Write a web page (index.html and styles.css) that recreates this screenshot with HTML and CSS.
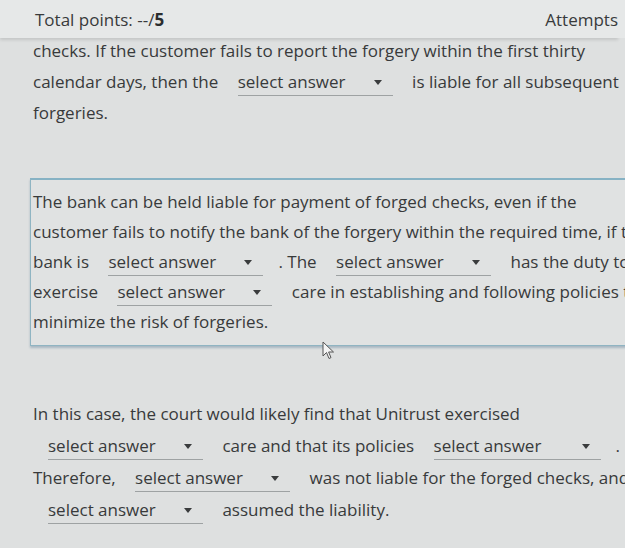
FILE: index.html
```html
<!DOCTYPE html>
<html>
<head>
<meta charset="utf-8">
<link rel="stylesheet" href="styles.css">
</head>
<body>
<div class="page">
  <header class="topbar">
    <span class="points">Total points: --/<b>5</b></span>
    <span class="attempts">Attempts</span>
  </header>
  <main class="content">
    <p class="para first">checks. If the customer fails to report the forgery within the first thirty<br>calendar days, then the <span class="sel"><span>select answer</span><i class="caret"></i></span> is liable for all subsequent<br>forgeries.</p>

    <div class="box">
      <p class="para">The bank can be held liable for payment of forged checks, even if the<br>customer fails to notify the bank of the forgery within the required time, if the<br>bank is <span class="sel"><span>select answer</span><i class="caret"></i></span>. The <span class="sel"><span>select answer</span><i class="caret"></i></span> has the duty to<br>exercise <span class="sel"><span>select answer</span><i class="caret"></i></span> care in establishing and following policies to<br>minimize the risk of forgeries.</p>
    </div>

    <p class="para third">In this case, the court would likely find that Unitrust exercised<br><span class="sel"><span>select answer</span><i class="caret"></i></span> care and that its policies <span class="sel wide"><span>select answer</span><i class="caret"></i></span>.<br>Therefore, <span class="sel"><span>select answer</span><i class="caret"></i></span> was not liable for the forged checks, and<br><span class="sel"><span>select answer</span><i class="caret"></i></span> assumed the liability.</p>
  </main>
  <svg class="cursor" width="14" height="20" viewBox="0 0 14 20"><path d="M1 1 L1 15 L4.5 11.5 L7 17.5 L9 16.6 L6.6 11 L11.5 11 Z" fill="#f4f4f4" stroke="#555" stroke-width="1"/></svg>
</div>
</body>
</html>
```
FILE: styles.css
```css
html, body {
  margin: 0;
  padding: 0;
  background: #dfe1e1;
  overflow: hidden;
}
.page {
  position: relative;
  width: 625px;
  height: 548px;
  overflow: hidden;
  font-family: "Open Sans", "Noto Sans", sans-serif;
  color: #383a3b;
  background: #dee0e0;
}
.topbar {
  box-sizing: border-box;
  display: flex;
  justify-content: space-between;
  align-items: center;
  height: 38px;
  padding: 0 0 0 35px;
  width: 618px;
  background: #e6e8e8;
  box-shadow: 0 2px 3px rgba(0,0,0,0.12);
  font-size: 17px;
  position: relative;
  z-index: 2;
}
.topbar::after {
  content: "";
  position: absolute;
  left: 100%;
  top: 0;
  width: 20px;
  height: 38px;
  background: #e6e8e8;
}
.attempts { white-space: nowrap; }
.points b { font-weight: 700; color: #2b2d2e; }
.content {
  width: 760px;
  padding-left: 33px;
  font-size: 17px;
}
.para {
  margin: 0;
  line-height: 31px;
  white-space: nowrap;
}
.first { margin-top: -3px; }
.box {
  margin: 50px 0 0 -3px;
  padding: 7px 0 8px 2px;
  border: 1px solid #8fb4c2;
  border-top: 2px solid #86b2c4;
  border-right: none;
  box-shadow: 0 2px 2px rgba(70,110,140,0.35);
  background: #e0e2e2;
}
.box .para { line-height: 30px; }
.third { margin-top: 52px; line-height: 32px; }
.sel {
  display: inline-flex;
  justify-content: space-between;
  align-items: center;
  width: 152px;
  margin: 0 15px;
  padding: 0 3px 1px 0;
  border-bottom: 1px solid #9ea2a3;
  line-height: 24px;
  vertical-align: baseline;
}
.sel.wide { width: 164px; }
.caret {
  width: 0;
  height: 0;
  border-left: 4px solid transparent;
  border-right: 4px solid transparent;
  border-top: 5px solid #3a3c3d;
  margin-right: 8px;
}
.cursor {
  position: absolute;
  left: 322px;
  top: 341px;
}
```
